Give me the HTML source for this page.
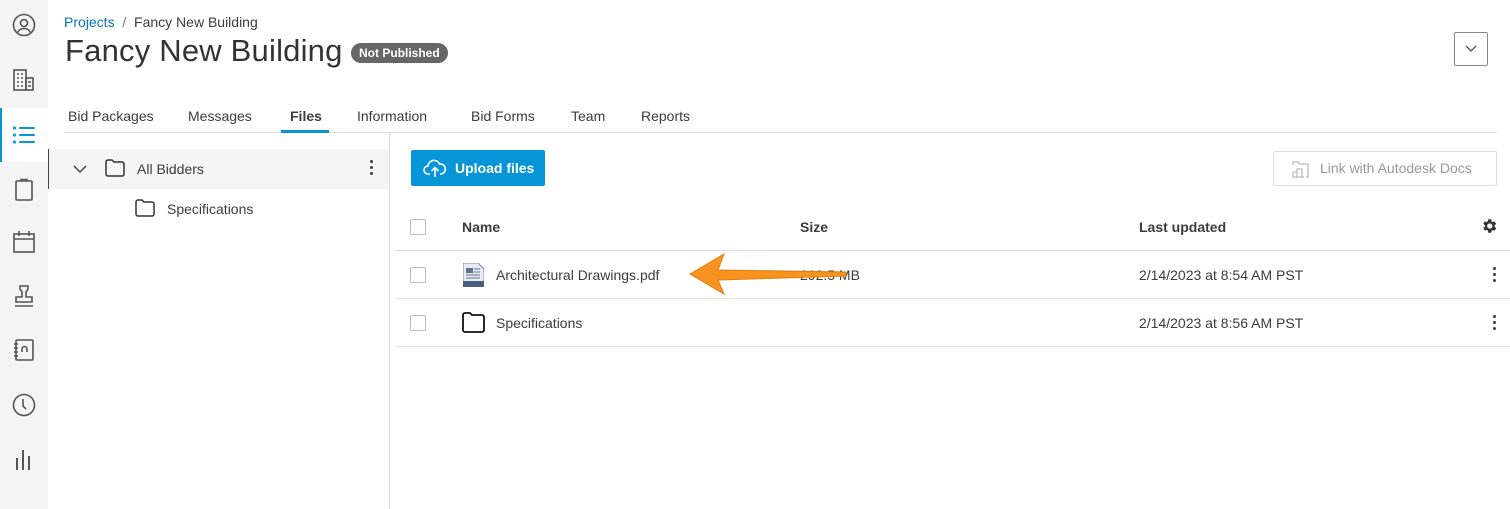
<!DOCTYPE html>
<html><head><style>
*{box-sizing:border-box;margin:0;padding:0}
body{width:1510px;height:509px;background:#fff;font-family:"Liberation Sans",sans-serif;color:#3c3c3c;position:relative;overflow:hidden}
.a{position:absolute}
.sb{left:0;top:0;width:48px;height:509px;background:#f5f5f5}
.ic{position:absolute;left:12px;width:24px;height:24px}
.tab{position:absolute;top:108px;font-size:14px;color:#3c3c3c}
.cb{position:absolute;width:16px;height:16px;border:1px solid #bbb;border-radius:2px;background:#fff}
.t14{font-size:14px}
.dots{position:absolute;width:4px}
.dots i{display:block;width:3px;height:3px;background:#3c3c3c;border-radius:50%;margin-bottom:3px}
</style></head><body>
<div class="a sb"></div>
<div class="a" style="left:0;top:108px;width:48px;height:54px;background:#fff"></div>
<div class="a" style="left:0;top:108px;width:2px;height:54px;background:#0696d7"></div>
<svg class="ic" style="top:13px" viewBox="0 0 24 24" fill="none" stroke="#555" stroke-width="1.6"><circle cx="12" cy="12" r="10.5"/><circle cx="12" cy="10" r="3.5"/><path d="M5.5 19.5c1.5-3 4-4 6.5-4s5 1 6.5 4"/></svg>
<svg class="ic" style="top:68px" viewBox="0 0 24 24" fill="none" stroke="#555" stroke-width="1.6"><rect x="2" y="2" width="12" height="20"/><rect x="14" y="10" width="7" height="12"/><path d="M5 6h2M9 6h2M5 10h2M9 10h2M5 14h2M9 14h2M5 18h2M9 18h2M16 14h3M16 18h3"/></svg>
<svg class="ic" style="top:123px" viewBox="0 0 24 24" fill="none" stroke="#0696d7" stroke-width="2" stroke-linecap="round"><path d="M8 5h14M8 12h14M8 19h14"/><circle cx="2.5" cy="5" r=".6"/><circle cx="2.5" cy="12" r=".6"/><circle cx="2.5" cy="19" r=".6"/></svg>
<svg class="ic" style="top:178px" viewBox="0 0 24 24" fill="none" stroke="#555" stroke-width="1.6"><rect x="4" y="3" width="16" height="19" rx="1"/><path d="M9 3V1.5h6V3"/></svg>
<svg class="ic" style="top:230px" viewBox="0 0 24 24" fill="none" stroke="#555" stroke-width="1.6"><rect x="2" y="4" width="20" height="18"/><path d="M2 9h20M7 1v5M17 1v5"/></svg>
<svg class="ic" style="top:284px" viewBox="0 0 24 24" fill="none" stroke="#555" stroke-width="1.6"><path d="M8 2h8v3l-2 3v5h6v5H4v-5h6V8L8 5z"/><path d="M3 22h18"/></svg>
<svg class="ic" style="top:338px" viewBox="0 0 24 24" fill="none" stroke="#555" stroke-width="1.6"><rect x="4" y="2" width="17" height="20" rx="1"/><path d="M2 6h4M2 10h4M2 14h4M2 18h4M10 14v-3a2.5 2.5 0 0 1 5 0v3"/></svg>
<svg class="ic" style="top:393px" viewBox="0 0 24 24" fill="none" stroke="#555" stroke-width="1.6"><circle cx="12" cy="12" r="10.5"/><path d="M11 6v7l3 3"/></svg>
<svg class="ic" style="top:448px" viewBox="0 0 24 24" fill="none" stroke="#555" stroke-width="2"><path d="M5 10v12M11 2v20M17 8v14"/></svg>

<div class="a" style="left:64px;top:14px;font-size:14px"><span style="color:#0673b8">Projects</span><span style="color:#777">&nbsp; / &nbsp;</span>Fancy New Building</div>
<div class="a" style="left:65px;top:33px;font-size:31px;letter-spacing:0.2px;color:#333">Fancy New Building</div>
<div class="a" style="left:351px;top:43px;height:20px;padding:0 8px;border-radius:10px;background:#666;color:#fff;font-size:12px;font-weight:bold;line-height:20px">Not Published</div>
<div class="a" style="left:1454px;top:32px;width:34px;height:34px;border:1px solid #888;border-radius:2px"><svg style="position:absolute;left:10px;top:12px" width="12" height="8" viewBox="0 0 12 8" fill="none" stroke="#555" stroke-width="1.3"><path d="M1 1l5 5 5-5"/></svg></div>

<div class="tab" style="left:68px">Bid Packages</div>
<div class="tab" style="left:188px">Messages</div>
<div class="tab" style="left:290px;font-weight:bold">Files</div>
<div class="tab" style="left:357px">Information</div>
<div class="tab" style="left:471px">Bid Forms</div>
<div class="tab" style="left:571px">Team</div>
<div class="tab" style="left:641px">Reports</div>
<div class="a" style="left:64px;top:132px;width:1433px;height:1px;background:#ddd"></div>
<div class="a" style="left:281px;top:130px;width:48px;height:3px;background:#0696d7"></div>
<div class="a" style="left:389px;top:133px;width:1px;height:376px;background:#ddd"></div>

<div class="a" style="left:48px;top:149px;width:341px;height:40px;background:#f5f5f5"></div>
<div class="a" style="left:48px;top:149px;width:1px;height:40px;background:#444"></div>
<svg class="a" style="left:73px;top:165px" width="14" height="9" viewBox="0 0 14 9" fill="none" stroke="#444" stroke-width="1.5"><path d="M1 1l6 6 6-6"/></svg>
<svg class="a" style="left:105px;top:159px" width="20" height="18" viewBox="0 0 20 18" fill="none" stroke="#333" stroke-width="1.5"><path d="M1 3a2 2 0 0 1 2-2h4l2 2h8a2 2 0 0 1 2 2v10a2 2 0 0 1-2 2H3a2 2 0 0 1-2-2z"/></svg>
<div class="a t14" style="left:137px;top:161px">All Bidders</div>
<div class="dots" style="left:370px;top:160px"><i></i><i></i><i></i></div>
<svg class="a" style="left:135px;top:199px" width="20" height="18" viewBox="0 0 20 18" fill="none" stroke="#333" stroke-width="1.5"><path d="M1 3a2 2 0 0 1 2-2h4l2 2h8a2 2 0 0 1 2 2v10a2 2 0 0 1-2 2H3a2 2 0 0 1-2-2z"/></svg>
<div class="a t14" style="left:167px;top:201px">Specifications</div>

<div class="a" style="left:411px;top:150px;width:134px;height:36px;background:#0696d7;border-radius:2px"></div>
<svg class="a" style="left:423px;top:157px" width="24" height="22" viewBox="0 0 24 22" fill="none" stroke="#fff" stroke-width="1.6"><path d="M7 17H5a4 4 0 0 1 0-8 6 6 0 0 1 11.5-2A5 5 0 0 1 18 17h-1M12 20v-9M8.5 14l3.5-3.5 3.5 3.5"/></svg>
<div class="a t14" style="left:455px;top:160px;color:#fff;font-weight:bold">Upload files</div>
<div class="a" style="left:1273px;top:151px;width:224px;height:35px;border:1px solid #ddd;border-radius:2px"></div>
<svg class="a" style="left:1290px;top:159px" width="22" height="20" viewBox="0 0 22 20" fill="none" stroke="#bbb" stroke-width="1.3"><path d="M3 6V3h5l2 2h8v13h-2M2 18h12M3 18v-5h4v5M7 18v-8h5v8"/></svg>
<div class="a t14" style="left:1320px;top:160px;color:#999">Link with Autodesk Docs</div>

<div class="cb" style="left:410px;top:219px"></div>
<div class="a t14" style="left:462px;top:219px;font-weight:bold">Name</div>
<div class="a t14" style="left:800px;top:219px;font-weight:bold">Size</div>
<div class="a t14" style="left:1139px;top:219px;font-weight:bold">Last updated</div>
<svg class="a" style="left:1480px;top:217px" width="18" height="18" viewBox="0 0 24 24"><path fill="#333" d="M19.4 13a7.8 7.8 0 0 0 0-2l2.1-1.6-2-3.5-2.5 1a7 7 0 0 0-1.7-1L15 3h-4l-.4 2.7a7 7 0 0 0-1.7 1l-2.5-1-2 3.5L6.6 11a7.8 7.8 0 0 0 0 2l-2.2 1.6 2 3.5 2.5-1a7 7 0 0 0 1.7 1L11 21h4l.4-2.7a7 7 0 0 0 1.7-1l2.5 1 2-3.5zM13 15.5a3.5 3.5 0 1 1 0-7 3.5 3.5 0 0 1 0 7z"/></svg>
<div class="a" style="left:395px;top:250px;width:1115px;height:1px;background:#ddd"></div>

<div class="cb" style="left:410px;top:267px"></div>
<svg class="a" style="left:463px;top:263px" width="21" height="24" viewBox="0 0 21 24"><path d="M0 0h15l6 6v18H0z" fill="#e8ecf2" stroke="#7a8aa0"/><rect x="3" y="5" width="7" height="5" fill="#5b7090"/><path d="M11 6h6M11 9h6M3 12h14M3 15h14" stroke="#5b7090"/><rect x="0" y="18" width="21" height="6" fill="#4a5f80"/></svg>
<div class="a t14" style="left:496px;top:267px">Architectural Drawings.pdf</div>
<div class="a t14" style="left:800px;top:267px">292.5 MB</div>
<div class="a t14" style="left:1139px;top:267px">2/14/2023 at 8:54 AM PST</div>
<div class="dots" style="left:1493px;top:267px"><i></i><i></i><i></i></div>
<div class="a" style="left:395px;top:298px;width:1115px;height:1px;background:#e5e5e5"></div>

<div class="cb" style="left:410px;top:315px"></div>
<svg class="a" style="left:462px;top:312px" width="24" height="22" viewBox="0 0 24 22" fill="none" stroke="#111" stroke-width="1.8"><path d="M1 3a2 2 0 0 1 2-2h5l2 2h10a2 2 0 0 1 2 2v13a2 2 0 0 1-2 2H3a2 2 0 0 1-2-2z"/></svg>
<div class="a t14" style="left:496px;top:315px">Specifications</div>
<div class="a t14" style="left:1139px;top:315px">2/14/2023 at 8:56 AM PST</div>
<div class="dots" style="left:1493px;top:315px"><i></i><i></i><i></i></div>
<div class="a" style="left:395px;top:346px;width:1115px;height:1px;background:#e5e5e5"></div>

<svg class="a" style="left:688px;top:250px" width="160" height="50" viewBox="0 0 160 50"><path d="M2 24L36 4l-6 16 128 2v4L30 30l6 14z" fill="#f7931e" stroke="#e07d10" stroke-width="1"/></svg>
</body></html>
